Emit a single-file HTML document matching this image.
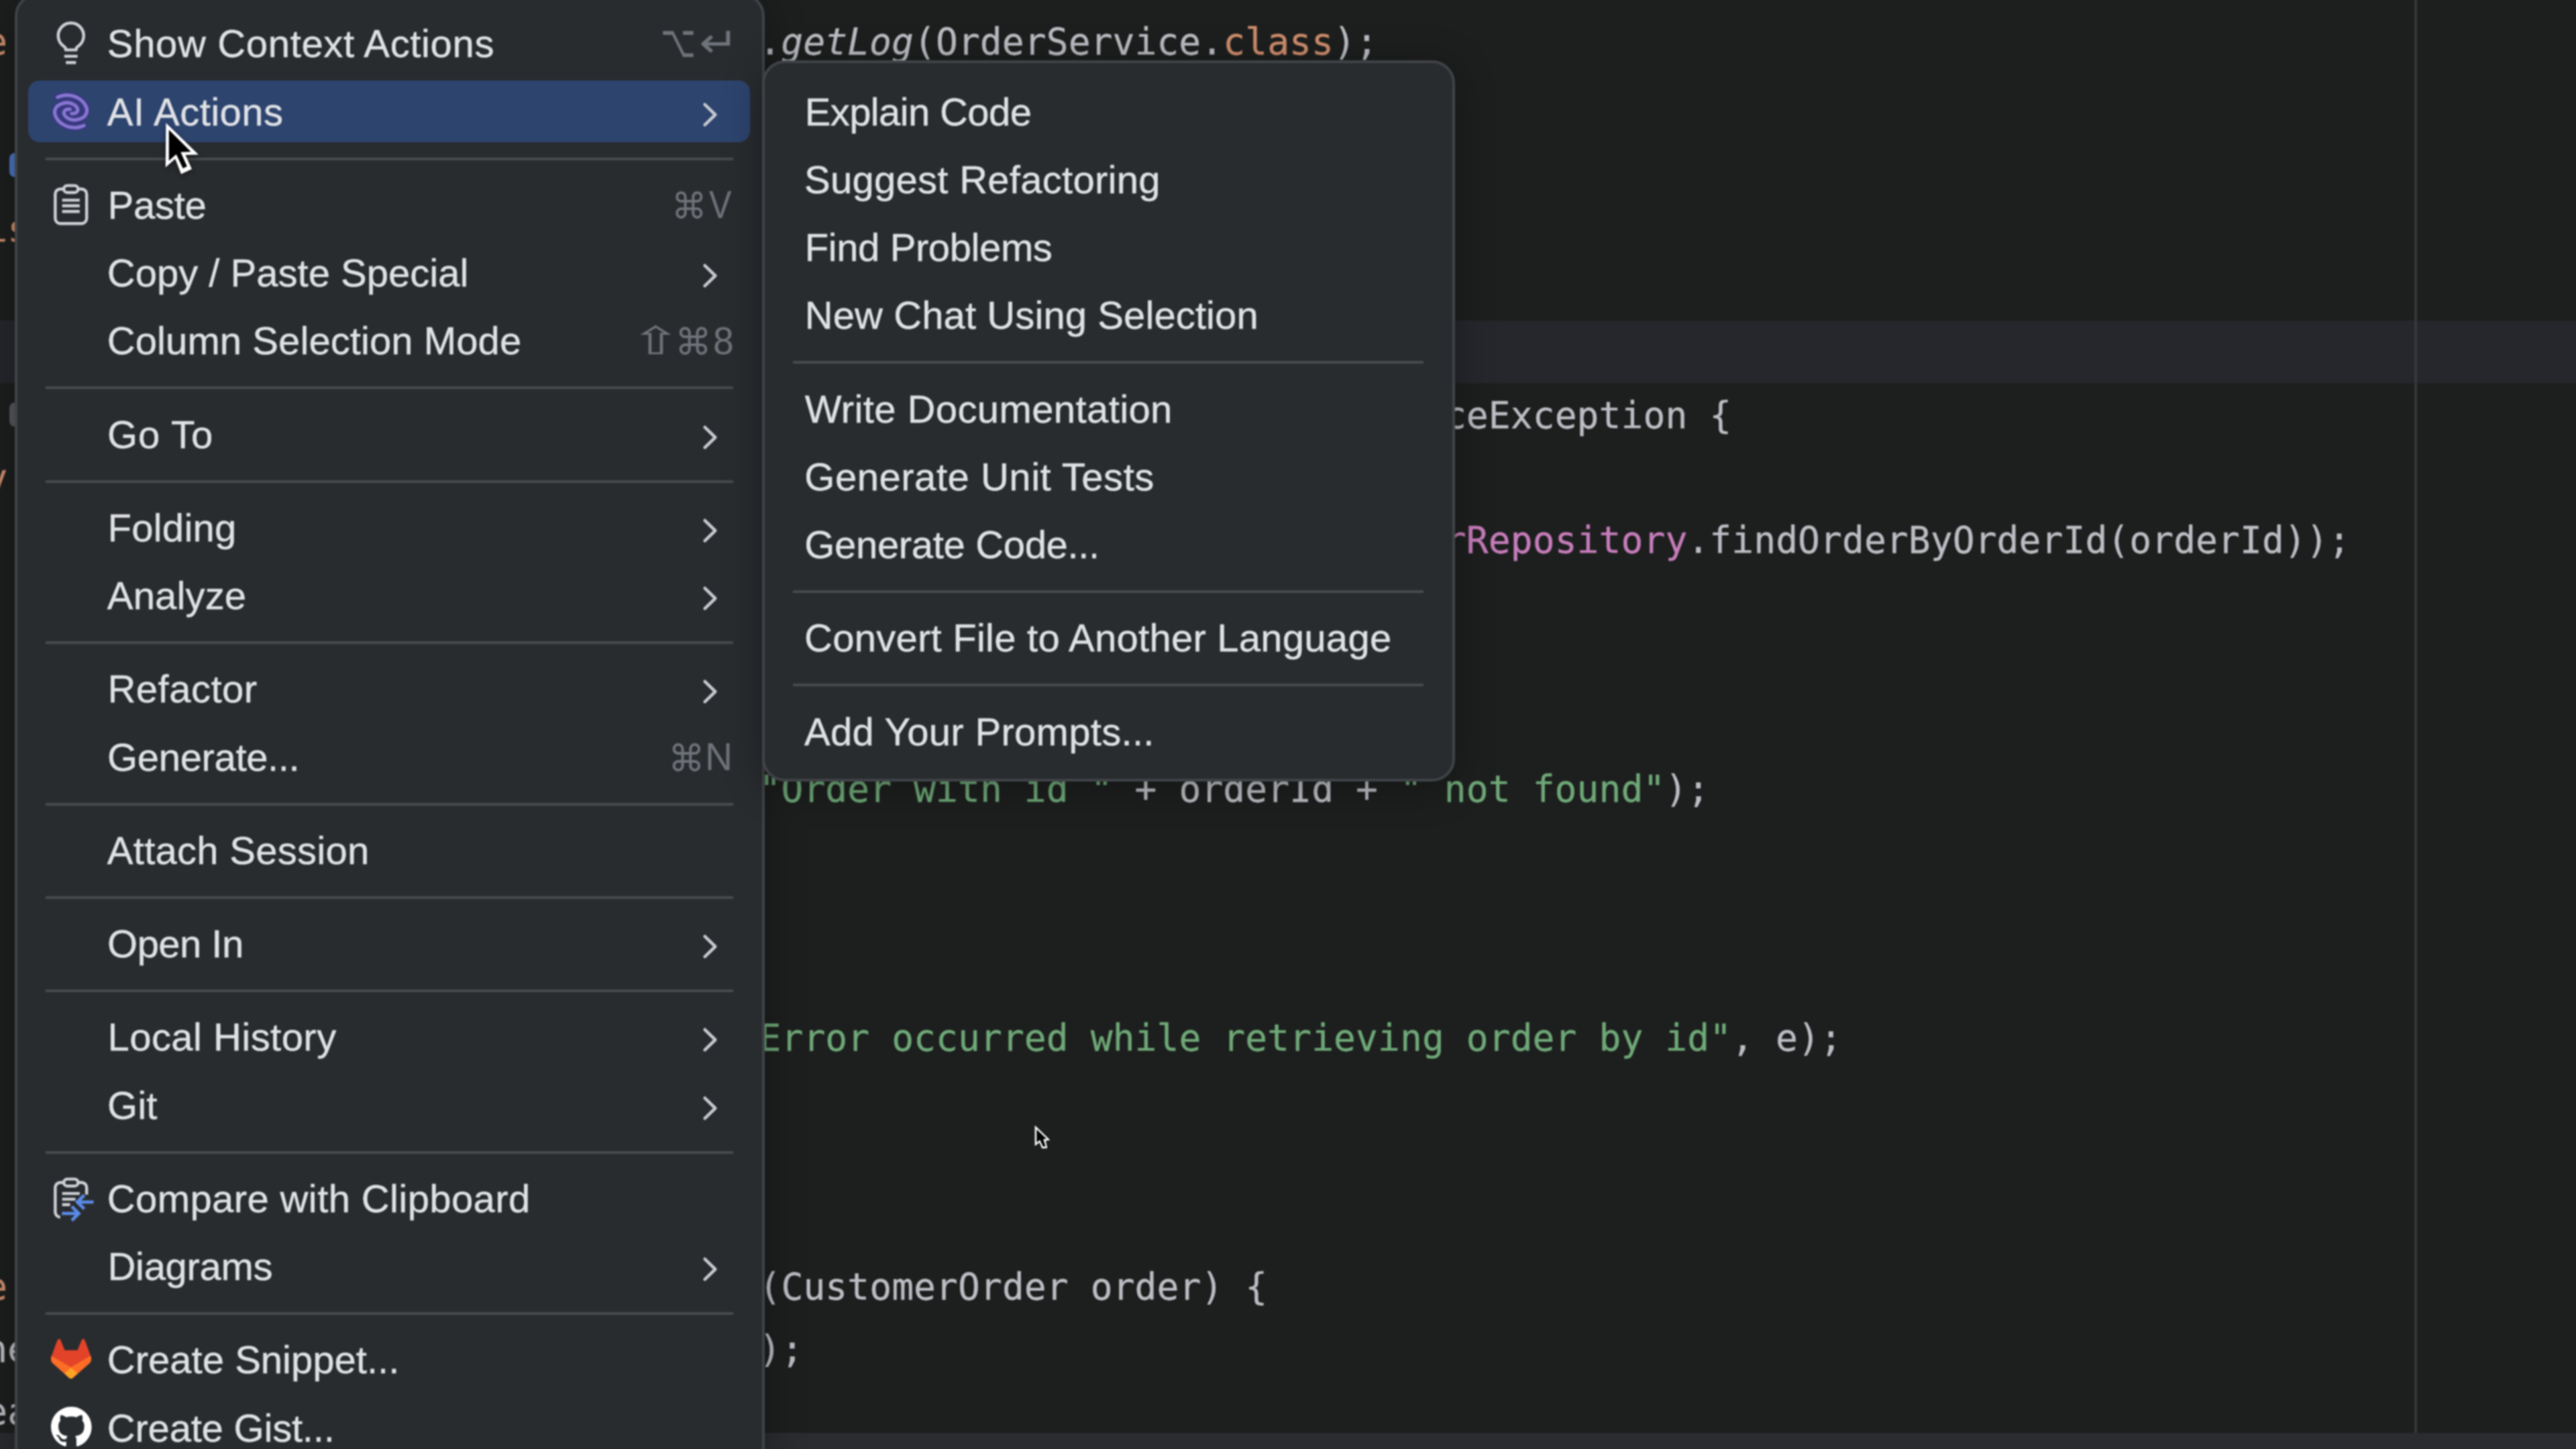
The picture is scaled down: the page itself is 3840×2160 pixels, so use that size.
<!DOCTYPE html>
<html lang="en"><head><meta charset="utf-8"><title>AI Actions context menu</title>
<style>
html,body{margin:0;padding:0}
body{width:3840px;height:2160px;overflow:hidden;background:#1d1f1e;position:relative;font-family:"Liberation Sans",sans-serif}
.abs{position:absolute}
#stage{position:absolute;left:0;top:0;width:3840px;height:2160px;filter:blur(.9px)}
#editor{position:absolute;left:0;top:0;width:3840px;height:2160px}
.cl{position:absolute;white-space:pre;font-family:"DejaVu Sans Mono","Liberation Mono",monospace;font-size:54.6px;line-height:92.8px;height:92.8px;color:#bcbec4;-webkit-text-stroke:.35px;letter-spacing:0.0780px}
.kw{color:#cf8e6d} .st{color:#6fa978} .fd{color:#c77dbb} .it{font-style:italic}
.menu{position:absolute;background:#292c2f;border:4px solid #404347;border-radius:34px;box-sizing:border-box}
.lbl{position:absolute;white-space:pre;-webkit-text-stroke:.45px;margin-top:-0.6px;height:101.25px;line-height:101.25px;font-size:58px;color:#dfe1e5}
.sc{position:absolute;white-space:pre;height:101.25px;line-height:101.25px;color:#6f737a;font-family:"Liberation Sans","DejaVu Sans",sans-serif;text-align:right}
.gl{position:absolute;white-space:pre;color:#6f737a;transform-origin:0 0;display:block}
.sep{position:absolute;height:4px;background:#484a4e}
.hl{position:absolute;background:#2d446e;border-radius:17px}
svg{position:absolute;overflow:visible}

</style></head><body><div id="stage">
<div id="editor">
<div class="abs" style="left:-60px;top:477.8px;width:3960px;height:93.2px;background:#26272d"></div>
<div class="abs" style="left:3599.3px;top:-60px;width:3.4px;height:2280px;background:#36393b"></div>
<div class="abs" style="left:-60px;top:2136px;width:3960px;height:90px;background:#2a2c2f"></div>
<div class="abs" style="left:14px;top:228px;width:20px;height:36px;border-radius:8px;background:#4a74c0"></div>
<div class="abs" style="left:14px;top:600px;width:20px;height:36px;border-radius:8px;background:#55585e"></div>
<div class="cl" style="left:-219.45px;top:16.21px"><span class="kw">private static final</span> Log <span class="fd it">log</span> = LogFactory.<span class="it">getLog</span>(OrderService.<span class="kw">class</span>);</div>
<div class="cl" style="left:-87.65px;top:294.61px"><span class="kw">this</span></div>
<div class="cl" style="left:1988.20px;top:573.01px">ServiceException {</div>
<div class="cl" style="left:-87.65px;top:665.81px"><span class="kw">try</span></div>
<div class="cl" style="left:2021.15px;top:758.61px"><span class="fd">orderRepository</span>.findOrderByOrderId(orderId));</div>
<div class="cl" style="left:1131.50px;top:1129.81px"><span class="st">"Order with id "</span> + orderId + <span class="st">" not found"</span>);</div>
<div class="cl" style="left:1131.50px;top:1501.01px"><span class="st">Error occurred while retrieving order by id"</span>, e);</div>
<div class="cl" style="left:-219.45px;top:1872.21px"><span class="kw">private</span></div>
<div class="cl" style="left:1131.50px;top:1872.21px">(CustomerOrder order) {</div>
<div class="cl" style="left:-87.65px;top:1965.01px">done</div>
<div class="cl" style="left:1131.50px;top:1965.01px">);</div>
<div class="cl" style="left:-87.65px;top:2057.81px">crea</div>
</div>
<div class="menu" style="left:21.7px;top:-10px;width:1118.0px;height:2300px;box-shadow:0 8px 60px rgba(0,0,0,.33)"></div>
<div class="lbl" style="left:159.8px;top:14.97px;letter-spacing:0.655px">Show Context Actions</div>
<span class="gl" style="left:985.07px;top:28.41px;font-size:67.37px;line-height:67.37px;height:67.37px;font-family:'DejaVu Sans',sans-serif;transform:scaleX(0.6739)">⌥</span>
<span class="gl" style="left:1042.28px;top:32.72px;font-size:62.26px;line-height:62.26px;height:62.26px;font-family:'DejaVu Sans',sans-serif;transform:scaleX(1.1296)">↵</span>
<div class="hl" style="left:42px;top:119.80px;width:1076px;height:92.7px"></div>
<div class="lbl" style="left:159.8px;top:116.22px;letter-spacing:0.488px">AI Actions</div>
<svg style="left:1048.0px;top:153.5px" width="21" height="34" viewBox="0 0 21 34"><path d="M2.7 1.8 L18.3 17 L2.7 32.2" fill="none" stroke="#c6c9cf" stroke-width="4.6" stroke-linecap="round" stroke-linejoin="round"/></svg>
<div class="sep" style="left:68px;top:234.5px;width:1025px"></div>
<div class="lbl" style="left:160.5px;top:255.48px;letter-spacing:-0.246px">Paste</div>
<span class="gl" style="left:1001.15px;top:281.09px;font-size:53.82px;line-height:53.82px;height:53.82px;font-family:'DejaVu Sans',sans-serif;transform:scaleX(0.9829)">⌘</span>
<span class="gl" style="left:1056.80px;top:276.79px;font-size:57.54px;line-height:57.54px;height:57.54px;font-family:'Liberation Sans',sans-serif;transform:scaleX(0.8717)">V</span>
<div class="lbl" style="left:159.8px;top:356.73px;letter-spacing:0.005px">Copy / Paste Special</div>
<svg style="left:1048.0px;top:394.1px" width="21" height="34" viewBox="0 0 21 34"><path d="M2.7 1.8 L18.3 17 L2.7 32.2" fill="none" stroke="#c6c9cf" stroke-width="4.6" stroke-linecap="round" stroke-linejoin="round"/></svg>
<div class="lbl" style="left:159.8px;top:457.98px;letter-spacing:0.082px">Column Selection Mode</div>
<span class="gl" style="left:938.82px;top:480.03px;font-size:57.47px;line-height:57.47px;height:57.47px;font-family:'DejaVu Sans',sans-serif;transform:scaleX(1.6024)">⇧</span>
<span class="gl" style="left:1005.85px;top:483.09px;font-size:55.13px;line-height:55.13px;height:55.13px;font-family:'DejaVu Sans',sans-serif;transform:scaleX(0.9905)">⌘</span>
<span class="gl" style="left:1063.39px;top:479.70px;font-size:57.32px;line-height:57.32px;height:57.32px;font-family:'Liberation Sans',sans-serif;transform:scaleX(0.9650)">8</span>
<div class="sep" style="left:68px;top:576.2px;width:1025px"></div>
<div class="lbl" style="left:160.1px;top:597.23px;letter-spacing:0.859px">Go To</div>
<svg style="left:1048.0px;top:634.6px" width="21" height="34" viewBox="0 0 21 34"><path d="M2.7 1.8 L18.3 17 L2.7 32.2" fill="none" stroke="#c6c9cf" stroke-width="4.6" stroke-linecap="round" stroke-linejoin="round"/></svg>
<div class="sep" style="left:68px;top:715.5px;width:1025px"></div>
<div class="lbl" style="left:160.5px;top:736.48px;letter-spacing:0.267px">Folding</div>
<svg style="left:1048.0px;top:773.8px" width="21" height="34" viewBox="0 0 21 34"><path d="M2.7 1.8 L18.3 17 L2.7 32.2" fill="none" stroke="#c6c9cf" stroke-width="4.6" stroke-linecap="round" stroke-linejoin="round"/></svg>
<div class="lbl" style="left:159.8px;top:837.73px;letter-spacing:0.165px">Analyze</div>
<svg style="left:1048.0px;top:875.1px" width="21" height="34" viewBox="0 0 21 34"><path d="M2.7 1.8 L18.3 17 L2.7 32.2" fill="none" stroke="#c6c9cf" stroke-width="4.6" stroke-linecap="round" stroke-linejoin="round"/></svg>
<div class="sep" style="left:68px;top:956.0px;width:1025px"></div>
<div class="lbl" style="left:160.5px;top:976.97px;letter-spacing:0.487px">Refactor</div>
<svg style="left:1048.0px;top:1014.3px" width="21" height="34" viewBox="0 0 21 34"><path d="M2.7 1.8 L18.3 17 L2.7 32.2" fill="none" stroke="#c6c9cf" stroke-width="4.6" stroke-linecap="round" stroke-linejoin="round"/></svg>
<div class="lbl" style="left:160.1px;top:1078.22px;letter-spacing:-0.361px">Generate...</div>
<span class="gl" style="left:996.15px;top:1103.05px;font-size:55.66px;line-height:55.66px;height:55.66px;font-family:'DejaVu Sans',sans-serif;transform:scaleX(0.9811)">⌘</span>
<span class="gl" style="left:1051.36px;top:1099.94px;font-size:57.25px;line-height:57.25px;height:57.25px;font-family:'Liberation Sans',sans-serif;transform:scaleX(0.9920)">N</span>
<div class="sep" style="left:68px;top:1196.5px;width:1025px"></div>
<div class="lbl" style="left:159.8px;top:1217.47px;letter-spacing:0.279px">Attach Session</div>
<div class="sep" style="left:68px;top:1335.7px;width:1025px"></div>
<div class="lbl" style="left:160.1px;top:1356.72px;letter-spacing:-0.554px">Open In</div>
<svg style="left:1048.0px;top:1394.0px" width="21" height="34" viewBox="0 0 21 34"><path d="M2.7 1.8 L18.3 17 L2.7 32.2" fill="none" stroke="#c6c9cf" stroke-width="4.6" stroke-linecap="round" stroke-linejoin="round"/></svg>
<div class="sep" style="left:68px;top:1475.0px;width:1025px"></div>
<div class="lbl" style="left:160.5px;top:1495.97px;letter-spacing:0.451px">Local History</div>
<svg style="left:1048.0px;top:1533.3px" width="21" height="34" viewBox="0 0 21 34"><path d="M2.7 1.8 L18.3 17 L2.7 32.2" fill="none" stroke="#c6c9cf" stroke-width="4.6" stroke-linecap="round" stroke-linejoin="round"/></svg>
<div class="lbl" style="left:160.1px;top:1597.22px;letter-spacing:0.125px">Git</div>
<svg style="left:1048.0px;top:1634.5px" width="21" height="34" viewBox="0 0 21 34"><path d="M2.7 1.8 L18.3 17 L2.7 32.2" fill="none" stroke="#c6c9cf" stroke-width="4.6" stroke-linecap="round" stroke-linejoin="round"/></svg>
<div class="sep" style="left:68px;top:1715.5px;width:1025px"></div>
<div class="lbl" style="left:159.8px;top:1736.47px;letter-spacing:0.392px">Compare with Clipboard</div>
<div class="lbl" style="left:160.5px;top:1837.72px;letter-spacing:-0.321px">Diagrams</div>
<svg style="left:1048.0px;top:1875.0px" width="21" height="34" viewBox="0 0 21 34"><path d="M2.7 1.8 L18.3 17 L2.7 32.2" fill="none" stroke="#c6c9cf" stroke-width="4.6" stroke-linecap="round" stroke-linejoin="round"/></svg>
<div class="sep" style="left:68px;top:1956.0px;width:1025px"></div>
<div class="lbl" style="left:159.8px;top:1976.97px;letter-spacing:0.020px">Create Snippet...</div>
<div class="lbl" style="left:159.8px;top:2078.22px;letter-spacing:-0.204px">Create Gist...</div>
<div class="menu" style="left:1135.7px;top:89.5px;width:1033.8px;height:1075.5px;box-shadow:0 8px 60px rgba(0,0,0,.33)"></div>
<div class="lbl" style="left:1199.7px;top:116.22px;letter-spacing:-0.617px">Explain Code</div>
<div class="lbl" style="left:1199.0px;top:217.48px;letter-spacing:0.276px">Suggest Refactoring</div>
<div class="lbl" style="left:1199.7px;top:318.73px;letter-spacing:-0.394px">Find Problems</div>
<div class="lbl" style="left:1199.7px;top:419.98px;letter-spacing:0.097px">New Chat Using Selection</div>
<div class="sep" style="left:1182px;top:538.2px;width:940px"></div>
<div class="lbl" style="left:1199.7px;top:559.23px;letter-spacing:0.400px">Write Documentation</div>
<div class="lbl" style="left:1199.3px;top:660.48px;letter-spacing:0.525px">Generate Unit Tests</div>
<div class="lbl" style="left:1199.3px;top:761.73px;letter-spacing:-0.341px">Generate Code...</div>
<div class="sep" style="left:1182px;top:880.0px;width:940px"></div>
<div class="lbl" style="left:1199.0px;top:900.98px;letter-spacing:0.251px">Convert File to Another Language</div>
<div class="sep" style="left:1182px;top:1019.2px;width:940px"></div>
<div class="lbl" style="left:1199.0px;top:1040.22px;letter-spacing:0.313px">Add Your Prompts...</div>
<svg style="left:72.25px;top:31.85px" width="67.50" height="67.50" viewBox="0 0 16 16" fill="none"><path d="M6.15 10.05 V9.7 C6.15 9.15 5.6 8.9 5.0 8.4 A4.5 4.5 0 1 1 11 8.4 C10.4 8.9 9.85 9.15 9.85 9.7 V10.05 Z" stroke="#ced0d6" stroke-width="1.05" stroke-linejoin="round"/><path d="M5.65 12.3 H10.35 M6.2 14.5 H9.8" stroke="#ced0d6" stroke-width="1.05"/></svg>
<svg style="left:72.25px;top:272.35px" width="67.50" height="67.50" viewBox="0 0 16 16" fill="none"><rect x="2.45" y="2.3" width="11.1" height="12.2" rx="1.8" stroke="#ced0d6" stroke-width="1.05"/><rect x="5.5" y="1.1" width="5" height="2.45" rx="1.2" fill="#292c2f" stroke="#ced0d6" stroke-width="1.05"/><path d="M4.9 6.25 H11.1 M4.9 8.25 H11.1 M4.9 10.25 H11.1" stroke="#ced0d6" stroke-width="1.05"/></svg>
<svg style="left:72.25px;top:1753.35px" width="67.50" height="67.50" viewBox="0 0 16 16" fill="none"><path d="M4.1 14.5 H4.2 A1.75 1.75 0 0 1 2.45 12.75 V4.1 A1.8 1.8 0 0 1 4.25 2.3 H11.75 A1.8 1.8 0 0 1 13.55 4.1 V6.6" stroke="#ced0d6" stroke-width="1.05"/><rect x="5.5" y="1.1" width="5" height="2.45" rx="1.2" fill="#292c2f" stroke="#ced0d6" stroke-width="1.05"/><path d="M4.9 6.2 H11.1 M4.9 8.2 H9.6 M4.9 10.15 H7.7" stroke="#ced0d6" stroke-width="1.05"/><path d="M16 9.2 H10.4 M12.7 6.75 L10.25 9.2 L12.7 11.65 M4.8 13.25 H10.6 M8.3 10.8 L10.75 13.25 L8.3 15.7" stroke="#5a8ae6" stroke-width="1.15"/></svg>
<svg style="left:70px;top:130px" width="72" height="72" viewBox="0 0 1449 1449" fill="none"><ellipse cx="715" cy="725" rx="450" ry="440" fill="#393a80" opacity=".9" transform="rotate(25 715 725)"/><path d="M320.0 300.0 C341.7 292.5 403.3 265.3 450.0 255.0 C496.7 244.7 545.0 236.8 600.0 238.0 C655.0 239.2 721.7 245.8 780.0 262.0 C838.3 278.2 898.3 303.7 950.0 335.0 C1001.7 366.3 1051.7 405.8 1090.0 450.0 C1128.3 494.2 1162.5 551.7 1180.0 600.0 C1197.5 648.3 1203.3 695.0 1195.0 740.0 C1186.7 785.0 1162.5 835.0 1130.0 870.0 C1097.5 905.0 1048.3 930.8 1000.0 950.0 C951.7 969.2 891.7 983.3 840.0 985.0 C788.3 986.7 735.0 975.8 690.0 960.0 C645.0 944.2 600.0 918.3 570.0 890.0 C540.0 861.7 516.7 820.0 510.0 790.0 C503.3 760.0 515.0 730.8 530.0 710.0 C545.0 689.2 573.3 673.3 600.0 665.0 C626.7 656.7 675.0 660.8 690.0 660.0 M1110.0 1150.0 C1088.3 1157.5 1026.7 1184.7 980.0 1195.0 C933.3 1205.3 885.0 1213.2 830.0 1212.0 C775.0 1210.8 708.3 1204.2 650.0 1188.0 C591.7 1171.8 531.7 1146.3 480.0 1115.0 C428.3 1083.7 378.3 1044.2 340.0 1000.0 C301.7 955.8 267.5 898.3 250.0 850.0 C232.5 801.7 226.7 755.0 235.0 710.0 C243.3 665.0 267.5 615.0 300.0 580.0 C332.5 545.0 381.7 519.2 430.0 500.0 C478.3 480.8 538.3 466.7 590.0 465.0 C641.7 463.3 695.0 474.2 740.0 490.0 C785.0 505.8 830.0 531.7 860.0 560.0 C890.0 588.3 913.3 630.0 920.0 660.0 C926.7 690.0 915.0 719.2 900.0 740.0 C885.0 760.8 856.7 776.7 830.0 785.0 C803.3 793.3 755.0 789.2 740.0 790.0" stroke="#393a80" stroke-width="215" stroke-linecap="round" stroke-linejoin="round" opacity=".9"/><path d="M320.0 300.0 C341.7 292.5 403.3 265.3 450.0 255.0 C496.7 244.7 545.0 236.8 600.0 238.0 C655.0 239.2 721.7 245.8 780.0 262.0 C838.3 278.2 898.3 303.7 950.0 335.0 C1001.7 366.3 1051.7 405.8 1090.0 450.0 C1128.3 494.2 1162.5 551.7 1180.0 600.0 C1197.5 648.3 1203.3 695.0 1195.0 740.0 C1186.7 785.0 1162.5 835.0 1130.0 870.0 C1097.5 905.0 1048.3 930.8 1000.0 950.0 C951.7 969.2 891.7 983.3 840.0 985.0 C788.3 986.7 735.0 975.8 690.0 960.0 C645.0 944.2 600.0 918.3 570.0 890.0 C540.0 861.7 516.7 820.0 510.0 790.0 C503.3 760.0 515.0 730.8 530.0 710.0 C545.0 689.2 573.3 673.3 600.0 665.0 C626.7 656.7 675.0 660.8 690.0 660.0 M1110.0 1150.0 C1088.3 1157.5 1026.7 1184.7 980.0 1195.0 C933.3 1205.3 885.0 1213.2 830.0 1212.0 C775.0 1210.8 708.3 1204.2 650.0 1188.0 C591.7 1171.8 531.7 1146.3 480.0 1115.0 C428.3 1083.7 378.3 1044.2 340.0 1000.0 C301.7 955.8 267.5 898.3 250.0 850.0 C232.5 801.7 226.7 755.0 235.0 710.0 C243.3 665.0 267.5 615.0 300.0 580.0 C332.5 545.0 381.7 519.2 430.0 500.0 C478.3 480.8 538.3 466.7 590.0 465.0 C641.7 463.3 695.0 474.2 740.0 490.0 C785.0 505.8 830.0 531.7 860.0 560.0 C890.0 588.3 913.3 630.0 920.0 660.0 C926.7 690.0 915.0 719.2 900.0 740.0 C885.0 760.8 856.7 776.7 830.0 785.0 C803.3 793.3 755.0 789.2 740.0 790.0" stroke="#8876d2" stroke-width="104" stroke-linecap="round" stroke-linejoin="round"/></svg>
<svg style="left:60px;top:1970px" width="200" height="112" viewBox="0 0 2576 1443"><defs><clipPath id="glc"><path d="M350 335 Q372 322 392 360 L470 550 L715 550 L793 360 Q813 322 835 335 Q850 345 862 375 L975 680 Q992 760 940 805 L620 1085 Q590 1108 560 1085 L245 805 Q193 760 210 680 L323 375 Q335 345 350 335 Z"/></clipPath></defs><path d="M350 335 Q372 322 392 360 L470 550 L715 550 L793 360 Q813 322 835 335 Q850 345 862 375 L975 680 Q992 760 940 805 L620 1085 Q590 1108 560 1085 L245 805 Q193 760 210 680 L323 375 Q335 345 350 335 Z" fill="#e24329"/><g clip-path="url(#glc)"><path d="M150 620 L590 875 L1030 620 L1030 1200 L150 1200 Z" fill="#fc6d26"/><path d="M590 885 L720 1000 L590 1130 L460 1000 Z" fill="#fca326"/></g></svg>
<svg style="left:75.9px;top:2097.3px" width="60.6" height="60.6" viewBox="0 0 16 16"><path fill="#ffffff" fill-rule="evenodd" d="M8 0C3.58 0 0 3.58 0 8c0 3.54 2.29 6.53 5.47 7.59.4.07.55-.17.55-.38 0-.19-.01-.82-.01-1.49-2.01.37-2.53-.49-2.69-.94-.09-.23-.48-.94-.82-1.13-.28-.15-.68-.52-.01-.53.63-.01 1.08.58 1.23.82.72 1.21 1.87.87 2.33.66.07-.52.28-.87.51-1.07-1.78-.2-3.64-.89-3.64-3.95 0-.87.31-1.59.82-2.15-.08-.2-.36-1.02.08-2.12 0 0 .67-.21 2.2.82.64-.18 1.32-.27 2-.27.68 0 1.36.09 2 .27 1.53-1.04 2.2-.82 2.2-.82.44 1.1.16 1.92.08 2.12.51.56.82 1.27.82 2.15 0 3.07-1.87 3.75-3.65 3.95.29.25.54.73.54 1.48 0 1.07-.01 1.93-.01 2.2 0 .21.15.46.55.38A8.013 8.013 0 0016 8c0-4.42-3.58-8-8-8z"/></svg>
<svg style="left:200px;top:160px;filter:drop-shadow(0 3px 4px rgba(0,0,0,.45))" width="140" height="120" viewBox="0 0 1690 1449"><path d="M572 282 L565 1082 L738 928 L845 1202 L1038 1112 L922 856 L1158 852 Z" fill="#ffffff"/><path d="M625 405 L625 962 L757 846 L877 1098 L952 1062 L836 806 L1022 800 Z" fill="#000000"/></svg>
<svg style="left:1500px;top:1650px" width="120" height="100" viewBox="0 0 1739 1449"><path d="M618 398 L618 848 L716 768 L772 898 L888 892 L852 732 L948 716 Z" fill="#ffffff"/><path d="M656 485 L656 772 L728 712 L795 858 L848 852 L800 700 L870 690 Z" fill="#000000"/></svg>
</div></body></html>
